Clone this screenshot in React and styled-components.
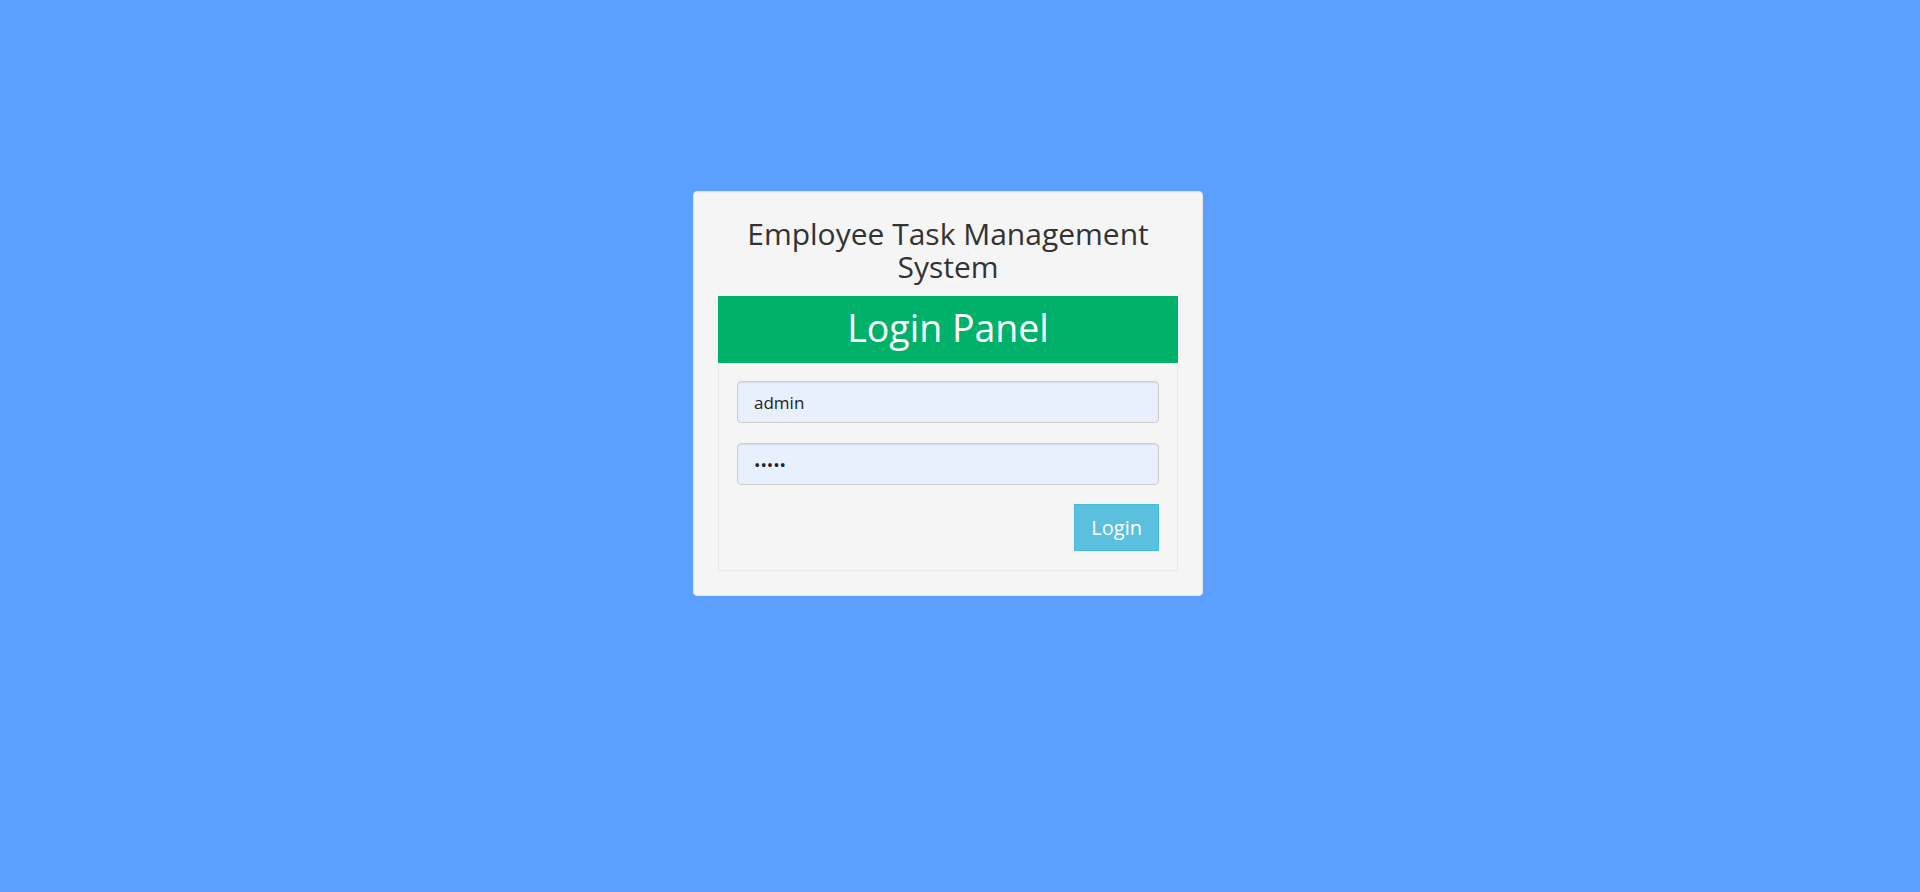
import styled, { createGlobalStyle } from "styled-components";

const GlobalStyle = createGlobalStyle`
  html, body {
    margin: 0;
    padding: 0;
    background: #5ba0ff;
    font-family: "Open Sans", "Liberation Sans", sans-serif;
  }
  * {
    box-sizing: border-box;
  }
`;

const App = () => {
  return (
    <>
      <GlobalStyle />
      <Page>
        <Card>
          <Title>Employee Task Management System</Title>
          <PanelHeading>Login Panel</PanelHeading>
          <PanelBody>
            <Input type="text" defaultValue="admin" $space={20} />
            <Input type="password" defaultValue="admin" $space={19} />
            <Actions>
              <LoginButton type="button">Login</LoginButton>
            </Actions>
          </PanelBody>
        </Card>
      </Page>
    </>
  );
};

export default App;

const Page = styled.div`
  min-height: 892px;
  display: flex;
  justify-content: center;
  align-items: flex-start;
  padding: 191px 24px 0 0;
`;

const Card = styled.div`
  width: 510px;
  background: #f5f5f5;
  border: 1px solid #e3e3e3;
  border-radius: 4px;
  padding: 25px 24px 24px;
  box-shadow: inset 0 1px 1px rgba(0, 0, 0, 0.03);
`;

const Title = styled.h2`
  margin: 0 0 13px;
  font-size: 30px;
  font-weight: 400;
  line-height: 33px;
  color: #333;
  text-align: center;
`;

const PanelHeading = styled.div`
  height: 67px;
  background: #00b16a;
  color: #fff;
  font-size: 37.5px;
  line-height: 40px;
  padding-top: 12px;
  text-align: center;
`;

const PanelBody = styled.div`
  display: flex;
  flex-direction: column;
  border: 1px solid #e8e8e8;
  border-top: none;
  padding: 18px 18px 19px;
`;

const Input = styled.input`
  height: 42px;
  width: 100%;
  margin-bottom: ${(p) => p.$space}px;
  padding: 0 16px;
  font-family: "Open Sans", "Liberation Sans", sans-serif;
  font-size: 17px;
  color: #222;
  background: #e8f0fe;
  border: 1px solid #cccccc;
  border-radius: 4px;
  outline: none;
  box-shadow: inset 0 1px 1px rgba(0, 0, 0, 0.075);
`;

const Actions = styled.div`
  display: flex;
  justify-content: flex-end;
`;

const LoginButton = styled.button`
  height: 47px;
  padding: 0 16px;
  background: #5bc0de;
  border: 1px solid #46b8da;
  border-radius: 0;
  color: #fff;
  font-family: "Open Sans", "Liberation Sans", sans-serif;
  font-size: 20px;
  cursor: pointer;
`;
